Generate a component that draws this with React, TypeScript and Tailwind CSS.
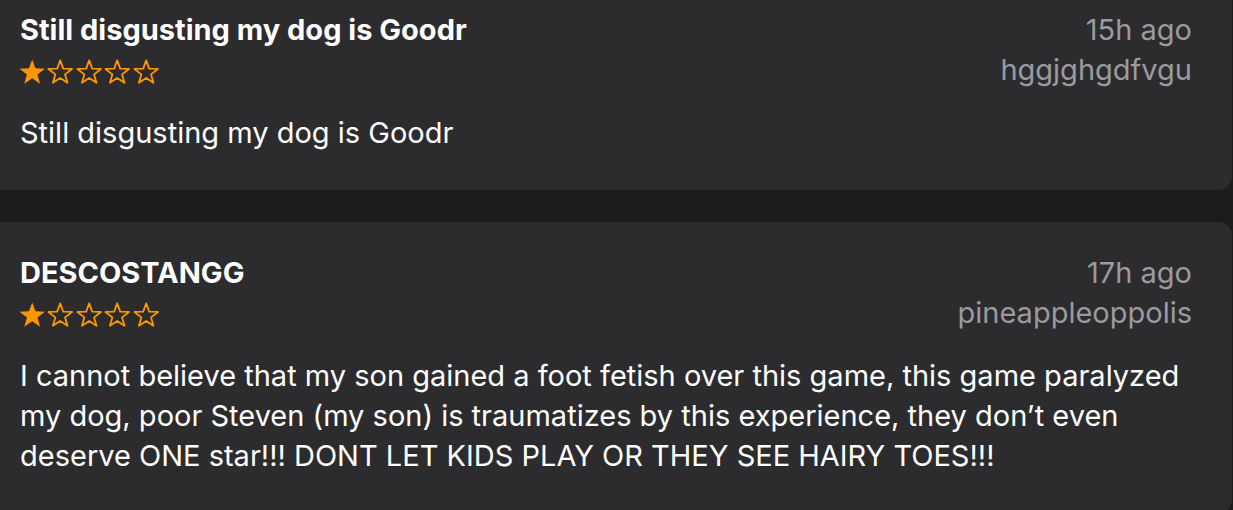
const reviews = [
  {
    title: 'Still disgusting my dog is Goodr',
    rating: 1,
    time: '15h ago',
    author: 'hggjghgdfvgu',
    body: 'Still disgusting my dog is Goodr',
  },
  {
    title: 'DESCOSTANGG',
    rating: 1,
    time: '17h ago',
    author: 'pineappleoppolis',
    body: 'I cannot believe that my son gained a foot fetish over this game, this game paralyzed my dog, poor Steven (my son) is traumatizes by this experience, they don\u2019t even deserve ONE star!!! DONT LET KIDS PLAY OR THEY SEE HAIRY TOES!!!',
  },
]

function starPoints(cx: number, cy: number, R: number, r: number) {
  const pts: string[] = []
  for (let i = 0; i < 10; i++) {
    const rad = i % 2 === 0 ? R : r
    const a = (Math.PI / 5) * i - Math.PI / 2
    pts.push(`${(cx + rad * Math.cos(a)).toFixed(2)},${(cy + rad * Math.sin(a)).toFixed(2)}`)
  }
  return pts.join(' ')
}

function Star({ filled }: { filled: boolean }) {
  return (
    <svg width="28.4" height="26" viewBox="0 0 28.4 26">
      {filled ? (
        <polygon points={starPoints(14.2, 13.8, 13.4, 5.5)} fill="#ff9500" />
      ) : (
        <polygon
          points={starPoints(14.2, 13.8, 12.4, 5.1)}
          fill="none"
          stroke="#ff9500"
          strokeWidth="1.8"
          strokeLinejoin="round"
        />
      )}
    </svg>
  )
}

function Stars({ rating }: { rating: number }) {
  return (
    <div className="flex -ml-[2px] mt-[9px]">
      {[1, 2, 3, 4, 5].map((n) => (
        <Star key={n} filled={n <= rating} />
      ))}
    </div>
  )
}

export default function App() {
  return (
    <div
      className="h-[510px] w-[1233px] overflow-hidden bg-[#1c1c1e] text-white"
      style={{ fontFamily: 'Inter, "Noto Sans", sans-serif' }}
    >
      <div className="-mt-[21px] -ml-[20px] w-[1252px] flex flex-col gap-[32px]">
        {reviews.map((r) => (
          <div key={r.author} className="rounded-[14px] bg-[#2c2c2e] pl-[40px] pr-[40px] pt-[31px] pb-[37px]">
            <div className="flex items-start justify-between">
              <div>
                <div className="text-[29px] leading-[40px] font-bold">{r.title}</div>
                <Stars rating={r.rating} />
              </div>
              <div className="text-right text-[29px] leading-[40px] text-[#9a9a9f]">
                <div>{r.time}</div>
                <div>{r.author}</div>
              </div>
            </div>
            <p className="mt-[23px] text-[29px] leading-[40px] pr-[10px]">{r.body}</p>
          </div>
        ))}
      </div>
    </div>
  )
}
